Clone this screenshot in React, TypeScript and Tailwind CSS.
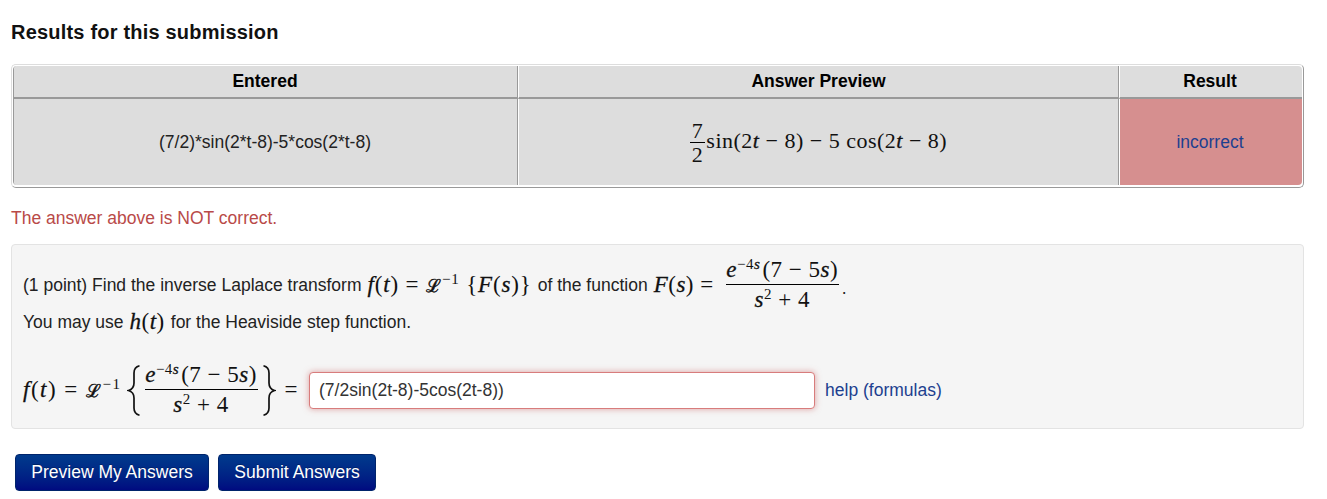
const sans = { fontFamily: '"Liberation Sans", Arial, sans-serif' };
const serif = { fontFamily: '"Liberation Serif", serif' };

function I({ children }: { children: React.ReactNode }) {
  return <span className="italic [-webkit-text-stroke:0.3px_#111]">{children}</span>;
}

function Sup({ children }: { children: React.ReactNode }) {
  return <sup className="relative -top-[8px] align-baseline text-[15px] leading-none">{children}</sup>;
}

function LaplaceFrac({ className = "" }: { className?: string }) {
  return (
    <span className={`inline-flex w-[113px] flex-col items-center ${className}`}>
      <span className="w-full border-b border-black pb-[1px] text-center leading-[26px] whitespace-nowrap">
        <I>e</I>
        <Sup>−4<I>s</I></Sup>
        <span className="ml-[2px]">(7 − 5<I>s</I>)</span>
      </span>
      <span className="pt-[2px] text-center leading-[26px] whitespace-nowrap">
        <I>s</I>
        <Sup>2</Sup> + 4
      </span>
    </span>
  );
}

function Brace({ flip = false }: { flip?: boolean }) {
  return (
    <svg width="14" height="51" viewBox="0 0 14 51" className={flip ? "-scale-x-100" : ""}>
      <path d="M12.5 0.8 C8 2 7 4.5 7 8 L7 18 C7 22.5 5 24.5 1.5 25.5 C5 26.5 7 28.5 7 33 L7 43 C7 46.5 8 49 12.5 50.2" fill="none" stroke="#111" strokeWidth="1.7" />
    </svg>
  );
}

function Script() {
  return <span style={{ fontFamily: '"DejaVu Serif", serif' }} className="text-[18px] text-[#111] [-webkit-text-stroke:0.5px_#111]">ℒ</span>;
}

export default function App() {
  return (
    <div className="h-[499px] w-[1327px] overflow-hidden bg-white pl-[11px] pr-[23px] text-[17.5px] text-[#222]" style={sans}>
      <h2 className="pt-[20px] text-[20px] leading-[24px] font-bold tracking-[0.2px] text-[#111]">Results for this submission</h2>

      {/* attempt results */}
      <div className="mt-[20px] w-[1293px] rounded-[5px] border border-[#ddd] border-r-[#999] border-b-[#999] p-px pb-[2px]">
        <div className="grid grid-cols-[504px_601px_183px] overflow-hidden rounded-[4px] border-l border-[#999] bg-white text-center">
          <div className="flex h-[33px] items-center justify-center border-r border-b-2 border-r-[#999] border-b-[#999] bg-[#ddd] pr-[1px] font-bold text-black">Entered</div>
          <div className="flex h-[33px] items-center justify-center border-r border-l border-b-2 border-r-[#999] border-l-white border-b-[#999] bg-[#ddd] font-bold text-black">Answer Preview</div>
          <div className="flex h-[33px] items-center justify-center border-l border-b-2 border-l-white border-b-[#999] bg-[#ddd] pr-[2px] font-bold text-black">Result</div>
          <div className="flex h-[86px] items-center justify-center border-r border-r-[#999] bg-[#ddd] pr-[1px]">(7/2)*sin(2*t-8)-5*cos(2*t-8)</div>
          <div className="flex h-[86px] items-center justify-center border-r border-l border-r-[#999] border-l-white bg-[#ddd] text-[22px] tracking-[0.5px] text-[#111]" style={serif}>
            <span className="whitespace-nowrap">
              <span className="mr-[1px] inline-flex flex-col items-center align-middle leading-[23px]">
                <span className="border-b border-black px-[2px]">7</span>
                <span className="px-[2px]">2</span>
              </span>
              sin(2<I>t</I> − 8) − 5 cos(2<I>t</I> − 8)
            </span>
          </div>
          <div className="flex h-[86px] items-center justify-center border-l border-l-white bg-[#d68f8f] pr-[2px] text-[#1d3f8f]">incorrect</div>
        </div>
      </div>

      <p className="mt-[19px] leading-[22px] text-[#b94a48]">The answer above is NOT correct.</p>

      {/* problem */}
      <div className="mt-[15px] h-[185px] w-[1293px] rounded-[4px] border border-[#e3e3e3] bg-[#f5f5f5] pl-[11px] pt-[12px]">
        <div className="flex h-[55px] items-center whitespace-nowrap">
          <span className="mt-[2px]">(1 point) Find the inverse Laplace transform</span>
          <span className="mt-[2px] ml-[6px] text-[23px] tracking-[0.85px] text-[#111]" style={serif}>
            <I>f</I>(<I>t</I>) = <Script /><Sup>−1</Sup> {"{"}<I>F</I>(<I>s</I>){"}"}
          </span>
          <span className="mt-[2px] ml-[6px]">of the function</span>
          <span className="ml-[6px] flex items-center text-[23px] tracking-[0.5px] text-[#111]" style={serif}>
            <span className="mt-[2px] mr-[12px]"><I>F</I>(<I>s</I>) =</span>
            <LaplaceFrac />
          </span>
          <span className="ml-[3px] mt-[8px]">.</span>
        </div>
        <div className="flex h-[20px] items-center whitespace-nowrap">
          You may use
          <span className="mx-[6px] text-[23px] tracking-[0.5px] text-[#111]" style={serif}>
            <I>h</I>(<I>t</I>)
          </span>
          for the Heaviside step function.
        </div>
        <div className="mt-[28px] flex h-[60px] items-center whitespace-nowrap">
          <span className="flex items-center text-[23px] tracking-[0.5px] text-[#111]" style={serif}>
            <span className="mr-[5px] tracking-[1.5px]"><I>f</I>(<I>t</I>) = <Script /><Sup>−1</Sup></span>
            <Brace />
            <LaplaceFrac className="mx-[4px]" />
            <Brace flip />
            <span className="mr-[11px] ml-[9px]">=</span>
          </span>
          <input
            readOnly
            value="(7/2sin(2t-8)-5cos(2t-8))"
            className="h-[37px] w-[506px] rounded-[4px] border border-[#d87c7c] bg-white px-[9px] text-[#333] shadow-[0_0_6px_rgba(200,90,90,0.55)] outline-none"
          />
          <span className="ml-[10px] text-[#1d3f8f]">help (formulas)</span>
        </div>
      </div>

      {/* actions */}
      <div className="mt-[25px] ml-[4px] flex gap-[9px]">
        <button className="h-[37px] w-[194px] rounded-[4px] border border-[#00246b] bg-gradient-to-b from-[#003a8c] to-[#000a80] text-white [text-shadow:0_-1px_0_rgba(0,0,0,0.25)]">Preview My Answers</button>
        <button className="h-[37px] w-[158px] rounded-[4px] border border-[#00246b] bg-gradient-to-b from-[#003a8c] to-[#000a80] text-white [text-shadow:0_-1px_0_rgba(0,0,0,0.25)]">Submit Answers</button>
      </div>
    </div>
  );
}
